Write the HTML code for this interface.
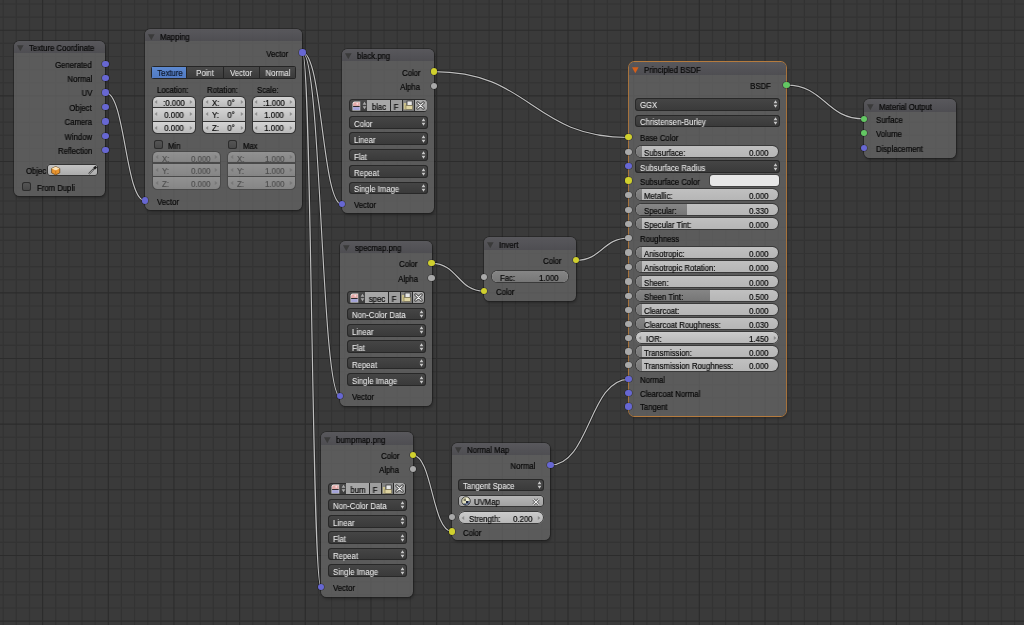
<!DOCTYPE html><html><head><meta charset="utf-8"><style>
html,body{margin:0;padding:0;width:1024px;height:625px;overflow:hidden;background:#3a3a3a}
.abs{position:absolute}
.t{position:absolute;font-family:"Liberation Sans",sans-serif;font-size:8.2px;line-height:10.66px;white-space:nowrap;will-change:transform;-webkit-text-stroke:0.2px currentColor;transform:scaleX(0.945);transform-origin:0 0}
.t.r{transform-origin:100% 0}
.t.c{transform:translateX(-50%) scaleX(0.945);transform-origin:50% 0}
.nd{position:absolute;border-radius:5.5px;background:rgba(104,104,104,0.72);box-shadow:0 0 0 0.8px rgba(25,25,25,0.6),1px 2px 3px rgba(0,0,0,0.3);overflow:hidden}
.nd.act{box-shadow:0 0 0 0.9px #b57b3e,1px 2px 3px rgba(0,0,0,0.3)}
.hd{position:absolute;left:0;top:0;right:0;background:linear-gradient(rgba(87,86,93,0.6),rgba(70,69,76,0.6))}
.sk{position:absolute;border-radius:50%;box-shadow:0 0 0 0.6px rgba(0,0,0,0.4)}
.dd{position:absolute;border-radius:3.5px;background:linear-gradient(#464646,#393939);box-shadow:inset 0 0 0 1px #282828}
.sl{position:absolute;border-radius:7px;background:#3a3a3a}
.sli{position:absolute;left:1px;top:1px;right:1px;bottom:1px;border-radius:6px;overflow:hidden;background:linear-gradient(#c0c0c0,#b6b6b6)}
.slf{position:absolute;left:0;top:0;bottom:0;background:linear-gradient(#868686,#767676)}
.nf{position:absolute;border-radius:7px;background:linear-gradient(#cdcdcd,#b6b6b6);box-shadow:inset 0 0 0 1px #3a3a3a}
.cb{position:absolute;border-radius:2.5px;background:linear-gradient(#565656,#464646);box-shadow:inset 0 0 0 1px #2c2c2c}

</style></head><body>
<svg class="abs" style="left:0;top:0" width="1024" height="625"><rect width="1024" height="625" fill="#3a3a3a"/><path d="M3.20 0V625M16.34 0V625M29.47 0V625M55.74 0V625M68.88 0V625M82.01 0V625M95.14 0V625M121.42 0V625M134.55 0V625M147.68 0V625M160.82 0V625M187.09 0V625M200.22 0V625M213.36 0V625M226.49 0V625M252.76 0V625M265.90 0V625M279.03 0V625M292.17 0V625M318.44 0V625M331.57 0V625M344.71 0V625M357.84 0V625M384.12 0V625M397.25 0V625M410.38 0V625M423.52 0V625M449.79 0V625M462.92 0V625M476.06 0V625M489.19 0V625M515.47 0V625M528.60 0V625M541.74 0V625M554.87 0V625M581.14 0V625M594.28 0V625M607.41 0V625M620.55 0V625M646.82 0V625M659.95 0V625M673.09 0V625M686.22 0V625M712.49 0V625M725.62 0V625M738.76 0V625M751.89 0V625M778.17 0V625M791.30 0V625M804.44 0V625M817.57 0V625M843.84 0V625M856.98 0V625M870.11 0V625M883.25 0V625M909.51 0V625M922.65 0V625M935.79 0V625M948.92 0V625M975.19 0V625M988.33 0V625M1001.46 0V625M1014.60 0V625M0 4.00H1024M0 17.13H1024M0 43.39H1024M0 56.52H1024M0 69.65H1024M0 82.78H1024M0 109.04H1024M0 122.17H1024M0 135.30H1024M0 148.43H1024M0 174.69H1024M0 187.82H1024M0 200.95H1024M0 214.08H1024M0 240.34H1024M0 253.47H1024M0 266.60H1024M0 279.73H1024M0 305.99H1024M0 319.12H1024M0 332.25H1024M0 345.38H1024M0 371.64H1024M0 384.77H1024M0 397.90H1024M0 411.03H1024M0 437.29H1024M0 450.42H1024M0 463.55H1024M0 476.68H1024M0 502.94H1024M0 516.07H1024M0 529.20H1024M0 542.33H1024M0 568.59H1024M0 581.72H1024M0 594.85H1024M0 607.98H1024" stroke="#333333" stroke-width="1.1" fill="none"/><path d="M42.61 0V625M108.28 0V625M173.95 0V625M239.63 0V625M305.31 0V625M370.98 0V625M436.65 0V625M502.33 0V625M568.00 0V625M633.68 0V625M699.36 0V625M765.03 0V625M830.71 0V625M896.38 0V625M962.06 0V625M0 30.26H1024M0 95.91H1024M0 161.56H1024M0 227.21H1024M0 292.86H1024M0 358.51H1024M0 424.16H1024M0 489.81H1024M0 555.46H1024M0 621.11H1024" stroke="#2c2c2c" stroke-width="1.1" fill="none"/><path d="M105.50 92.60 C125.25 92.60 125.25 200.60 145.00 200.60" fill="none" stroke="rgba(0,0,0,0.5)" stroke-width="2.5"/><path d="M105.50 92.60 C125.25 92.60 125.25 200.60 145.00 200.60" fill="none" stroke="#bebebe" stroke-width="1.2"/><path d="M302.50 52.60 C322.20 52.60 322.20 204.30 341.90 204.30" fill="none" stroke="rgba(0,0,0,0.5)" stroke-width="2.5"/><path d="M302.50 52.60 C322.20 52.60 322.20 204.30 341.90 204.30" fill="none" stroke="#bebebe" stroke-width="1.2"/><path d="M302.50 52.60 C321.20 52.60 321.20 396.30 339.90 396.30" fill="none" stroke="rgba(0,0,0,0.5)" stroke-width="2.5"/><path d="M302.50 52.60 C321.20 52.60 321.20 396.30 339.90 396.30" fill="none" stroke="#bebebe" stroke-width="1.2"/><path d="M302.50 52.60 C311.70 52.60 311.70 587.10 320.90 587.10" fill="none" stroke="rgba(0,0,0,0.5)" stroke-width="2.5"/><path d="M302.50 52.60 C311.70 52.60 311.70 587.10 320.90 587.10" fill="none" stroke="#bebebe" stroke-width="1.2"/><path d="M434.00 71.60 C531.30 71.60 531.30 137.50 628.60 137.50" fill="none" stroke="rgba(0,0,0,0.5)" stroke-width="2.5"/><path d="M434.00 71.60 C531.30 71.60 531.30 137.50 628.60 137.50" fill="none" stroke="#bebebe" stroke-width="1.2"/><path d="M431.70 263.30 C457.85 263.30 457.85 291.20 484.00 291.20" fill="none" stroke="rgba(0,0,0,0.5)" stroke-width="2.5"/><path d="M431.70 263.30 C457.85 263.30 457.85 291.20 484.00 291.20" fill="none" stroke="#bebebe" stroke-width="1.2"/><path d="M575.80 260.30 C602.20 260.30 602.20 238.20 628.60 238.20" fill="none" stroke="rgba(0,0,0,0.5)" stroke-width="2.5"/><path d="M575.80 260.30 C602.20 260.30 602.20 238.20 628.60 238.20" fill="none" stroke="#bebebe" stroke-width="1.2"/><path d="M412.70 455.10 C432.30 455.10 432.30 531.50 451.90 531.50" fill="none" stroke="rgba(0,0,0,0.5)" stroke-width="2.5"/><path d="M412.70 455.10 C432.30 455.10 432.30 531.50 451.90 531.50" fill="none" stroke="#bebebe" stroke-width="1.2"/><path d="M550.40 465.00 C589.50 465.00 589.50 379.30 628.60 379.30" fill="none" stroke="rgba(0,0,0,0.5)" stroke-width="2.5"/><path d="M550.40 465.00 C589.50 465.00 589.50 379.30 628.60 379.30" fill="none" stroke="#bebebe" stroke-width="1.2"/><path d="M786.40 85.20 C825.25 85.20 825.25 118.90 864.10 118.90" fill="none" stroke="rgba(0,0,0,0.5)" stroke-width="2.5"/><path d="M786.40 85.20 C825.25 85.20 825.25 118.90 864.10 118.90" fill="none" stroke="#bebebe" stroke-width="1.2"/></svg>
<div class="nd" style="left:13.90px;top:40.70px;width:91.40px;height:155.80px;"><div class="hd" style="height:12.50px"></div></div>
<svg class="abs" style="left:17.20px;top:44.80px" width="7" height="7"><path d="M0 0.2 L6.6 0.2 L3.3 6.2 Z" fill="#3a3a3a"/></svg>
<div class="t" style="left:28.90px;top:44px;color:#080808;">Texture Coordinate</div>
<div class="t r" style="right:932.00px;top:61px;color:#080808;">Generated</div>
<div class="sk" style="left:102.30px;top:60.50px;width:6.40px;height:6.40px;background:#6767d2"></div>
<div class="t r" style="right:932.00px;top:75px;color:#080808;">Normal</div>
<div class="sk" style="left:102.30px;top:74.93px;width:6.40px;height:6.40px;background:#6767d2"></div>
<div class="t r" style="right:932.00px;top:89px;color:#080808;">UV</div>
<div class="sk" style="left:102.30px;top:89.36px;width:6.40px;height:6.40px;background:#6767d2"></div>
<div class="t r" style="right:932.00px;top:104px;color:#080808;">Object</div>
<div class="sk" style="left:102.30px;top:103.79px;width:6.40px;height:6.40px;background:#6767d2"></div>
<div class="t r" style="right:932.00px;top:118px;color:#080808;">Camera</div>
<div class="sk" style="left:102.30px;top:118.22px;width:6.40px;height:6.40px;background:#6767d2"></div>
<div class="t r" style="right:932.00px;top:133px;color:#080808;">Window</div>
<div class="sk" style="left:102.30px;top:132.65px;width:6.40px;height:6.40px;background:#6767d2"></div>
<div class="t r" style="right:932.00px;top:147px;color:#080808;">Reflection</div>
<div class="sk" style="left:102.30px;top:147.08px;width:6.40px;height:6.40px;background:#6767d2"></div>
<div class="t" style="left:25.50px;top:167px;color:#080808;">Objec</div>
<div class="abs" style="left:47.20px;top:163.50px;width:51.00px;height:12.90px;border-radius:3px;background:linear-gradient(#c6c6c6,#a9a9a9);box-shadow:inset 0 0 0 1px #353535"></div>
<svg class="abs" style="left:50.6px;top:165.6px" width="10" height="10"><path d="M4.7 0.5 L8.8 2.5 L8.8 6.9 L4.7 8.9 L0.6 6.9 L0.6 2.5 Z" fill="#e9952f" stroke="#4a3010" stroke-width="0.6"/><path d="M0.8 2.6 L4.7 4.5 L8.6 2.6 L4.7 0.7 Z" fill="#fbe2b8"/><path d="M4.7 4.5 L4.7 8.7" stroke="#b86a1c" stroke-width="0.7"/></svg>
<svg class="abs" style="left:88.2px;top:165.4px" width="10" height="10"><path d="M0.9 8.9 L5.6 4.2" stroke="#2a2a2a" stroke-width="1.7"/><path d="M1.1 8.7 L5.3 4.5" stroke="#e8e8e8" stroke-width="0.7"/><path d="M5 2.9 L7.3 0.7 L9.1 2.5 L6.9 4.8 Z" fill="#1e1e1e"/></svg>
<div class="cb" style="left:22.30px;top:182.30px;width:9.10px;height:8.70px;"></div>
<div class="t" style="left:36.70px;top:184px;color:#080808;">From Dupli</div>
<div class="nd" style="left:145.00px;top:28.90px;width:157.40px;height:180.80px;"><div class="hd" style="height:12.40px"></div></div>
<svg class="abs" style="left:148.30px;top:33.80px" width="7" height="7"><path d="M0 0.2 L6.6 0.2 L3.3 6.2 Z" fill="#3a3a3a"/></svg>
<div class="t" style="left:160.00px;top:33px;color:#080808;">Mapping</div>
<div class="t r" style="right:735.40px;top:50px;color:#080808;">Vector</div>
<div class="sk" style="left:299.30px;top:49.40px;width:6.40px;height:6.40px;background:#6767d2"></div>
<div class="abs" style="left:151.30px;top:65.60px;width:144.50px;height:13.20px;border-radius:3px;overflow:hidden;box-shadow:inset 0 0 0 1px #252525"><div class="abs" style="left:0;top:0;width:35.6px;bottom:0;background:linear-gradient(#5e8bd2,#5079c2);box-shadow:inset 0 0 0 1px #252525"></div><div class="abs" style="left:35.6px;top:0;right:0;bottom:0;background:linear-gradient(#4a4a4a,#393939);box-shadow:inset 0 1px 0 #252525,inset 0 -1px 0 #252525,inset -1px 0 0 #252525"></div><div class="abs" style="left:71.5px;top:0;width:1px;bottom:0;background:#252525"></div><div class="abs" style="left:107.3px;top:0;width:1px;bottom:0;background:#252525"></div></div>
<div class="t c" style="left:169.50px;top:69px;color:#0c1424;">Texture</div>
<div class="t c" style="left:205.40px;top:69px;color:#ececec;-webkit-text-stroke:0.05px currentColor;">Point</div>
<div class="t c" style="left:241.40px;top:69px;color:#ececec;-webkit-text-stroke:0.05px currentColor;">Vector</div>
<div class="t c" style="left:277.50px;top:69px;color:#ececec;-webkit-text-stroke:0.05px currentColor;">Normal</div>
<div class="t" style="left:156.80px;top:86px;color:#080808;">Location:</div>
<div class="t" style="left:206.80px;top:86px;color:#080808;">Rotation:</div>
<div class="t" style="left:256.80px;top:86px;color:#080808;">Scale:</div>
<div class="abs" style="left:151.80px;top:95.50px;width:44.00px;height:38.90px;border-radius:5.5px;background:#353535"><div class="abs" style="left:1px;top:1px;right:1px;bottom:1px;border-radius:4.5px;overflow:hidden;background:#353535"><div class="abs" style="left:0;right:0;top:0.00px;height:10.35px;background:linear-gradient(#d4d4d4,#bababa)"></div><div class="abs" style="left:0;right:0;top:11.55px;height:12.60px;background:linear-gradient(#d4d4d4,#bababa)"></div><div class="abs" style="left:0;right:0;top:25.35px;height:11.55px;background:linear-gradient(#d4d4d4,#bababa)"></div></div></div>
<div class="t c" style="left:174.00px;top:99px;color:#080808;">:0.000</div>
<svg class="abs" style="left:154.40px;top:98.68px" width="4" height="6"><path d="M0.6 3 L3.2 0.9 L3.2 5.1 Z" fill="#8e8e8e"/></svg>
<svg class="abs" style="left:189.20px;top:98.68px" width="4" height="6"><path d="M3.4 3 L0.8 0.9 L0.8 5.1 Z" fill="#8e8e8e"/></svg>
<div class="t c" style="left:174.00px;top:111px;color:#080808;">0.000</div>
<svg class="abs" style="left:154.40px;top:111.35px" width="4" height="6"><path d="M0.6 3 L3.2 0.9 L3.2 5.1 Z" fill="#8e8e8e"/></svg>
<svg class="abs" style="left:189.20px;top:111.35px" width="4" height="6"><path d="M3.4 3 L0.8 0.9 L0.8 5.1 Z" fill="#8e8e8e"/></svg>
<div class="t c" style="left:174.00px;top:124px;color:#080808;">0.000</div>
<svg class="abs" style="left:154.40px;top:124.62px" width="4" height="6"><path d="M0.6 3 L3.2 0.9 L3.2 5.1 Z" fill="#8e8e8e"/></svg>
<svg class="abs" style="left:189.20px;top:124.62px" width="4" height="6"><path d="M3.4 3 L0.8 0.9 L0.8 5.1 Z" fill="#8e8e8e"/></svg>
<div class="abs" style="left:202.40px;top:95.50px;width:43.70px;height:38.90px;border-radius:5.5px;background:#353535"><div class="abs" style="left:1px;top:1px;right:1px;bottom:1px;border-radius:4.5px;overflow:hidden;background:#353535"><div class="abs" style="left:0;right:0;top:0.00px;height:10.35px;background:linear-gradient(#d4d4d4,#bababa)"></div><div class="abs" style="left:0;right:0;top:11.55px;height:12.60px;background:linear-gradient(#d4d4d4,#bababa)"></div><div class="abs" style="left:0;right:0;top:25.35px;height:11.55px;background:linear-gradient(#d4d4d4,#bababa)"></div></div></div>
<div class="t" style="left:212.00px;top:99px;color:#080808;">X:</div>
<div class="t r" style="right:788.90px;top:99px;color:#080808;">0°</div>
<svg class="abs" style="left:205.00px;top:98.68px" width="4" height="6"><path d="M0.6 3 L3.2 0.9 L3.2 5.1 Z" fill="#8e8e8e"/></svg>
<svg class="abs" style="left:239.50px;top:98.68px" width="4" height="6"><path d="M3.4 3 L0.8 0.9 L0.8 5.1 Z" fill="#8e8e8e"/></svg>
<div class="t" style="left:212.00px;top:111px;color:#080808;">Y:</div>
<div class="t r" style="right:788.90px;top:111px;color:#080808;">0°</div>
<svg class="abs" style="left:205.00px;top:111.35px" width="4" height="6"><path d="M0.6 3 L3.2 0.9 L3.2 5.1 Z" fill="#8e8e8e"/></svg>
<svg class="abs" style="left:239.50px;top:111.35px" width="4" height="6"><path d="M3.4 3 L0.8 0.9 L0.8 5.1 Z" fill="#8e8e8e"/></svg>
<div class="t" style="left:212.00px;top:124px;color:#080808;">Z:</div>
<div class="t r" style="right:788.90px;top:124px;color:#080808;">0°</div>
<svg class="abs" style="left:205.00px;top:124.62px" width="4" height="6"><path d="M0.6 3 L3.2 0.9 L3.2 5.1 Z" fill="#8e8e8e"/></svg>
<svg class="abs" style="left:239.50px;top:124.62px" width="4" height="6"><path d="M3.4 3 L0.8 0.9 L0.8 5.1 Z" fill="#8e8e8e"/></svg>
<div class="abs" style="left:251.80px;top:95.50px;width:43.80px;height:38.90px;border-radius:5.5px;background:#353535"><div class="abs" style="left:1px;top:1px;right:1px;bottom:1px;border-radius:4.5px;overflow:hidden;background:#353535"><div class="abs" style="left:0;right:0;top:0.00px;height:10.35px;background:linear-gradient(#d4d4d4,#bababa)"></div><div class="abs" style="left:0;right:0;top:11.55px;height:12.60px;background:linear-gradient(#d4d4d4,#bababa)"></div><div class="abs" style="left:0;right:0;top:25.35px;height:11.55px;background:linear-gradient(#d4d4d4,#bababa)"></div></div></div>
<div class="t c" style="left:273.90px;top:99px;color:#080808;">:1.000</div>
<svg class="abs" style="left:254.40px;top:98.68px" width="4" height="6"><path d="M0.6 3 L3.2 0.9 L3.2 5.1 Z" fill="#8e8e8e"/></svg>
<svg class="abs" style="left:289.00px;top:98.68px" width="4" height="6"><path d="M3.4 3 L0.8 0.9 L0.8 5.1 Z" fill="#8e8e8e"/></svg>
<div class="t c" style="left:273.90px;top:111px;color:#080808;">1.000</div>
<svg class="abs" style="left:254.40px;top:111.35px" width="4" height="6"><path d="M0.6 3 L3.2 0.9 L3.2 5.1 Z" fill="#8e8e8e"/></svg>
<svg class="abs" style="left:289.00px;top:111.35px" width="4" height="6"><path d="M3.4 3 L0.8 0.9 L0.8 5.1 Z" fill="#8e8e8e"/></svg>
<div class="t c" style="left:273.90px;top:124px;color:#080808;">1.000</div>
<svg class="abs" style="left:254.40px;top:124.62px" width="4" height="6"><path d="M0.6 3 L3.2 0.9 L3.2 5.1 Z" fill="#8e8e8e"/></svg>
<svg class="abs" style="left:289.00px;top:124.62px" width="4" height="6"><path d="M3.4 3 L0.8 0.9 L0.8 5.1 Z" fill="#8e8e8e"/></svg>
<div class="cb" style="left:153.80px;top:140.30px;width:9.00px;height:8.70px;"></div>
<div class="t" style="left:167.90px;top:142px;color:#080808;">Min</div>
<div class="cb" style="left:228.40px;top:140.30px;width:9.10px;height:8.70px;"></div>
<div class="t" style="left:242.90px;top:142px;color:#080808;">Max</div>
<div class="abs" style="opacity:0.45;left:152.00px;top:150.90px;width:69.00px;height:39.30px;border-radius:5.5px;background:#353535"><div class="abs" style="left:1px;top:1px;right:1px;bottom:1px;border-radius:4.5px;overflow:hidden;background:#353535"><div class="abs" style="left:0;right:0;top:0.00px;height:10.60px;background:linear-gradient(#d4d4d4,#bababa)"></div><div class="abs" style="left:0;right:0;top:11.80px;height:12.40px;background:linear-gradient(#d4d4d4,#bababa)"></div><div class="abs" style="left:0;right:0;top:25.40px;height:11.90px;background:linear-gradient(#d4d4d4,#bababa)"></div></div></div>
<div class="t" style="left:161.60px;top:155px;color:rgba(40,40,40,0.55);">X:</div>
<div class="t r" style="right:814.00px;top:155px;color:rgba(40,40,40,0.55);">0.000</div>
<svg class="abs" style="left:154.60px;top:154.20px" width="4" height="6"><path d="M0.6 3 L3.2 0.9 L3.2 5.1 Z" fill="rgba(100,100,100,0.5)"/></svg>
<svg class="abs" style="left:214.40px;top:154.20px" width="4" height="6"><path d="M3.4 3 L0.8 0.9 L0.8 5.1 Z" fill="rgba(100,100,100,0.5)"/></svg>
<div class="t" style="left:161.60px;top:167px;color:rgba(40,40,40,0.55);">Y:</div>
<div class="t r" style="right:814.00px;top:167px;color:rgba(40,40,40,0.55);">0.000</div>
<svg class="abs" style="left:154.60px;top:166.90px" width="4" height="6"><path d="M0.6 3 L3.2 0.9 L3.2 5.1 Z" fill="rgba(100,100,100,0.5)"/></svg>
<svg class="abs" style="left:214.40px;top:166.90px" width="4" height="6"><path d="M3.4 3 L0.8 0.9 L0.8 5.1 Z" fill="rgba(100,100,100,0.5)"/></svg>
<div class="t" style="left:161.60px;top:180px;color:rgba(40,40,40,0.55);">Z:</div>
<div class="t r" style="right:814.00px;top:180px;color:rgba(40,40,40,0.55);">0.000</div>
<svg class="abs" style="left:154.60px;top:180.25px" width="4" height="6"><path d="M0.6 3 L3.2 0.9 L3.2 5.1 Z" fill="rgba(100,100,100,0.5)"/></svg>
<svg class="abs" style="left:214.40px;top:180.25px" width="4" height="6"><path d="M3.4 3 L0.8 0.9 L0.8 5.1 Z" fill="rgba(100,100,100,0.5)"/></svg>
<div class="abs" style="opacity:0.45;left:227.00px;top:150.90px;width:68.50px;height:39.30px;border-radius:5.5px;background:#353535"><div class="abs" style="left:1px;top:1px;right:1px;bottom:1px;border-radius:4.5px;overflow:hidden;background:#353535"><div class="abs" style="left:0;right:0;top:0.00px;height:10.60px;background:linear-gradient(#d4d4d4,#bababa)"></div><div class="abs" style="left:0;right:0;top:11.80px;height:12.40px;background:linear-gradient(#d4d4d4,#bababa)"></div><div class="abs" style="left:0;right:0;top:25.40px;height:11.90px;background:linear-gradient(#d4d4d4,#bababa)"></div></div></div>
<div class="t" style="left:236.60px;top:155px;color:rgba(40,40,40,0.55);">X:</div>
<div class="t r" style="right:739.50px;top:155px;color:rgba(40,40,40,0.55);">1.000</div>
<svg class="abs" style="left:229.60px;top:154.20px" width="4" height="6"><path d="M0.6 3 L3.2 0.9 L3.2 5.1 Z" fill="rgba(100,100,100,0.5)"/></svg>
<svg class="abs" style="left:288.90px;top:154.20px" width="4" height="6"><path d="M3.4 3 L0.8 0.9 L0.8 5.1 Z" fill="rgba(100,100,100,0.5)"/></svg>
<div class="t" style="left:236.60px;top:167px;color:rgba(40,40,40,0.55);">Y:</div>
<div class="t r" style="right:739.50px;top:167px;color:rgba(40,40,40,0.55);">1.000</div>
<svg class="abs" style="left:229.60px;top:166.90px" width="4" height="6"><path d="M0.6 3 L3.2 0.9 L3.2 5.1 Z" fill="rgba(100,100,100,0.5)"/></svg>
<svg class="abs" style="left:288.90px;top:166.90px" width="4" height="6"><path d="M3.4 3 L0.8 0.9 L0.8 5.1 Z" fill="rgba(100,100,100,0.5)"/></svg>
<div class="t" style="left:236.60px;top:180px;color:rgba(40,40,40,0.55);">Z:</div>
<div class="t r" style="right:739.50px;top:180px;color:rgba(40,40,40,0.55);">1.000</div>
<svg class="abs" style="left:229.60px;top:180.25px" width="4" height="6"><path d="M0.6 3 L3.2 0.9 L3.2 5.1 Z" fill="rgba(100,100,100,0.5)"/></svg>
<svg class="abs" style="left:288.90px;top:180.25px" width="4" height="6"><path d="M3.4 3 L0.8 0.9 L0.8 5.1 Z" fill="rgba(100,100,100,0.5)"/></svg>
<div class="sk" style="left:141.80px;top:197.40px;width:6.40px;height:6.40px;background:#6767d2"></div>
<div class="t" style="left:156.60px;top:198px;color:#080808;">Vector</div>
<div class="nd" style="left:342.00px;top:48.50px;width:91.80px;height:164.90px;"><div class="hd" style="height:12.30px"></div></div>
<svg class="abs" style="left:345.30px;top:52.80px" width="7" height="7"><path d="M0 0.2 L6.6 0.2 L3.3 6.2 Z" fill="#3a3a3a"/></svg>
<div class="t" style="left:357.00px;top:52px;color:#080808;">black.png</div>
<div class="t r" style="right:603.80px;top:69px;color:#080808;">Color</div>
<div class="sk" style="left:430.60px;top:68.40px;width:6.40px;height:6.40px;background:#d0d02e"></div>
<div class="t r" style="right:603.80px;top:83px;color:#080808;">Alpha</div>
<div class="sk" style="left:430.60px;top:83.10px;width:6.40px;height:6.40px;background:#a9a9a9"></div>
<div class="abs" style="left:348.60px;top:99.20px;width:78.80px;height:12.60px;border-radius:3.5px;overflow:hidden;background:#2a2a2a"><div class="abs" style="left:1px;top:1px;width:17.6px;bottom:1px;border-radius:2.5px 0 0 2.5px;background:linear-gradient(#4a4a4a,#3c3c3c)"></div><div class="abs" style="left:18.8px;top:0.8px;width:22.5px;bottom:0.8px;background:#a7a7a7"></div><div class="abs" style="left:42.0px;top:0.8px;width:11.2px;bottom:0.8px;background:#9e9e9e"></div><div class="abs" style="left:54.0px;top:0.8px;width:11.5px;bottom:0.8px;background:linear-gradient(#858585,#727272)"></div><div class="abs" style="left:66.3px;top:0.8px;right:0.8px;bottom:0.8px;border-radius:0 2.5px 2.5px 0;background:linear-gradient(#aeaeae,#9c9c9c)"></div></div>
<svg class="abs" style="left:352.20px;top:100.60px" width="9" height="10"><path d="M2.2 0.3 H8.4 V9.7 H0.3 V2.2 Z" fill="#ececec" stroke="#3a3a3a" stroke-width="0.4"/><rect x="1.1" y="1.3" width="6.6" height="3.9" fill="#e2a8a6"/><path d="M1.1 1.3 H2.6 L1.1 2.8 Z" fill="#f4f4f4"/><circle cx="5.3" cy="2.7" r="1.0" fill="#f4dcdc"/><rect x="1.1" y="5.0" width="6.6" height="1.1" fill="#2e2a2e"/><rect x="1.1" y="6.1" width="6.6" height="2.9" fill="#a2a2d6"/></svg>
<svg class="abs" style="left:361.50px;top:101.00px" width="5" height="9"><path d="M2.5 0.8 L4.4 3.8 L0.6 3.8 Z M2.5 8.2 L4.4 5.2 L0.6 5.2 Z" fill="#aaaaaa"/></svg>
<div class="t c" style="left:378.60px;top:103px;color:#080808;">blac</div>
<div class="t c" style="left:396.20px;top:103px;color:#080808;">F</div>
<svg class="abs" style="left:403.20px;top:100.30px" width="11" height="10"><rect x="4.0" y="1.0" width="5.2" height="4.6" fill="#e6e6e6" stroke="#262626" stroke-width="0.7"/><path d="M0.8 2.9 H3.2 V9.4 H0.8 Z" fill="#c9bf8a"/><rect x="3.0" y="5.4" width="6.6" height="4.0" fill="#ddd3a0" stroke="#5a5230" stroke-width="0.4"/></svg>
<svg class="abs" style="left:416.40px;top:100.90px" width="9" height="9"><path d="M1.7 1.7 L7.3 7.3 M7.3 1.7 L1.7 7.3" stroke="#3c3c3c" stroke-width="2.7" stroke-linecap="round"/><path d="M1.8 1.8 L7.2 7.2 M7.2 1.8 L1.8 7.2" stroke="#f0f0f0" stroke-width="1.2" stroke-linecap="round"/></svg>
<div class="dd" style="left:348.60px;top:116.00px;width:79.20px;height:12.60px;"></div>
<div class="t" style="left:353.60px;top:120px;color:#ececec;-webkit-text-stroke:0.05px currentColor;">Color</div>
<svg class="abs" style="left:421.10px;top:117.30px" width="5" height="10"><path d="M2.5 1.2 L4.4 4.3 L0.6 4.3 Z M2.5 8.8 L4.4 5.7 L0.6 5.7 Z" fill="#c8c8c8"/></svg>
<div class="dd" style="left:348.60px;top:132.40px;width:79.20px;height:12.60px;"></div>
<div class="t" style="left:353.60px;top:136px;color:#ececec;-webkit-text-stroke:0.05px currentColor;">Linear</div>
<svg class="abs" style="left:421.10px;top:133.70px" width="5" height="10"><path d="M2.5 1.2 L4.4 4.3 L0.6 4.3 Z M2.5 8.8 L4.4 5.7 L0.6 5.7 Z" fill="#c8c8c8"/></svg>
<div class="dd" style="left:348.60px;top:148.80px;width:79.20px;height:12.60px;"></div>
<div class="t" style="left:353.60px;top:153px;color:#ececec;-webkit-text-stroke:0.05px currentColor;">Flat</div>
<svg class="abs" style="left:421.10px;top:150.10px" width="5" height="10"><path d="M2.5 1.2 L4.4 4.3 L0.6 4.3 Z M2.5 8.8 L4.4 5.7 L0.6 5.7 Z" fill="#c8c8c8"/></svg>
<div class="dd" style="left:348.60px;top:165.20px;width:79.20px;height:12.60px;"></div>
<div class="t" style="left:353.60px;top:169px;color:#ececec;-webkit-text-stroke:0.05px currentColor;">Repeat</div>
<svg class="abs" style="left:421.10px;top:166.50px" width="5" height="10"><path d="M2.5 1.2 L4.4 4.3 L0.6 4.3 Z M2.5 8.8 L4.4 5.7 L0.6 5.7 Z" fill="#c8c8c8"/></svg>
<div class="dd" style="left:348.60px;top:181.60px;width:79.20px;height:12.60px;"></div>
<div class="t" style="left:353.60px;top:185px;color:#ececec;-webkit-text-stroke:0.05px currentColor;">Single Image</div>
<svg class="abs" style="left:421.10px;top:182.90px" width="5" height="10"><path d="M2.5 1.2 L4.4 4.3 L0.6 4.3 Z M2.5 8.8 L4.4 5.7 L0.6 5.7 Z" fill="#c8c8c8"/></svg>
<div class="sk" style="left:338.80px;top:201.10px;width:6.40px;height:6.40px;background:#6767d2"></div>
<div class="t" style="left:353.60px;top:201px;color:#080808;">Vector</div>
<div class="nd" style="left:340.00px;top:240.50px;width:91.60px;height:165.30px;"><div class="hd" style="height:12.50px"></div></div>
<svg class="abs" style="left:343.30px;top:244.80px" width="7" height="7"><path d="M0 0.2 L6.6 0.2 L3.3 6.2 Z" fill="#3a3a3a"/></svg>
<div class="t" style="left:355.00px;top:244px;color:#080808;">specmap.png</div>
<div class="t r" style="right:606.00px;top:260px;color:#080808;">Color</div>
<div class="sk" style="left:428.40px;top:260.10px;width:6.40px;height:6.40px;background:#d0d02e"></div>
<div class="t r" style="right:606.00px;top:275px;color:#080808;">Alpha</div>
<div class="sk" style="left:428.40px;top:274.70px;width:6.40px;height:6.40px;background:#a9a9a9"></div>
<div class="abs" style="left:346.60px;top:291.20px;width:78.60px;height:12.50px;border-radius:3.5px;overflow:hidden;background:#2a2a2a"><div class="abs" style="left:1px;top:1px;width:17.6px;bottom:1px;border-radius:2.5px 0 0 2.5px;background:linear-gradient(#4a4a4a,#3c3c3c)"></div><div class="abs" style="left:18.8px;top:0.8px;width:22.5px;bottom:0.8px;background:#a7a7a7"></div><div class="abs" style="left:42.0px;top:0.8px;width:11.2px;bottom:0.8px;background:#9e9e9e"></div><div class="abs" style="left:54.0px;top:0.8px;width:11.5px;bottom:0.8px;background:linear-gradient(#858585,#727272)"></div><div class="abs" style="left:66.3px;top:0.8px;right:0.8px;bottom:0.8px;border-radius:0 2.5px 2.5px 0;background:linear-gradient(#aeaeae,#9c9c9c)"></div></div>
<svg class="abs" style="left:350.20px;top:292.55px" width="9" height="10"><path d="M2.2 0.3 H8.4 V9.7 H0.3 V2.2 Z" fill="#ececec" stroke="#3a3a3a" stroke-width="0.4"/><rect x="1.1" y="1.3" width="6.6" height="3.9" fill="#e2a8a6"/><path d="M1.1 1.3 H2.6 L1.1 2.8 Z" fill="#f4f4f4"/><circle cx="5.3" cy="2.7" r="1.0" fill="#f4dcdc"/><rect x="1.1" y="5.0" width="6.6" height="1.1" fill="#2e2a2e"/><rect x="1.1" y="6.1" width="6.6" height="2.9" fill="#a2a2d6"/></svg>
<svg class="abs" style="left:359.50px;top:292.95px" width="5" height="9"><path d="M2.5 0.8 L4.4 3.8 L0.6 3.8 Z M2.5 8.2 L4.4 5.2 L0.6 5.2 Z" fill="#aaaaaa"/></svg>
<div class="t c" style="left:376.60px;top:295px;color:#080808;">spec</div>
<div class="t c" style="left:394.20px;top:295px;color:#080808;">F</div>
<svg class="abs" style="left:401.20px;top:292.25px" width="11" height="10"><rect x="4.0" y="1.0" width="5.2" height="4.6" fill="#e6e6e6" stroke="#262626" stroke-width="0.7"/><path d="M0.8 2.9 H3.2 V9.4 H0.8 Z" fill="#c9bf8a"/><rect x="3.0" y="5.4" width="6.6" height="4.0" fill="#ddd3a0" stroke="#5a5230" stroke-width="0.4"/></svg>
<svg class="abs" style="left:414.40px;top:292.85px" width="9" height="9"><path d="M1.7 1.7 L7.3 7.3 M7.3 1.7 L1.7 7.3" stroke="#3c3c3c" stroke-width="2.7" stroke-linecap="round"/><path d="M1.8 1.8 L7.2 7.2 M7.2 1.8 L1.8 7.2" stroke="#f0f0f0" stroke-width="1.2" stroke-linecap="round"/></svg>
<div class="dd" style="left:346.60px;top:307.60px;width:79.00px;height:12.60px;"></div>
<div class="t" style="left:351.60px;top:311px;color:#ececec;-webkit-text-stroke:0.05px currentColor;">Non-Color Data</div>
<svg class="abs" style="left:418.90px;top:308.90px" width="5" height="10"><path d="M2.5 1.2 L4.4 4.3 L0.6 4.3 Z M2.5 8.8 L4.4 5.7 L0.6 5.7 Z" fill="#c8c8c8"/></svg>
<div class="dd" style="left:346.60px;top:324.00px;width:79.00px;height:12.60px;"></div>
<div class="t" style="left:351.60px;top:328px;color:#ececec;-webkit-text-stroke:0.05px currentColor;">Linear</div>
<svg class="abs" style="left:418.90px;top:325.30px" width="5" height="10"><path d="M2.5 1.2 L4.4 4.3 L0.6 4.3 Z M2.5 8.8 L4.4 5.7 L0.6 5.7 Z" fill="#c8c8c8"/></svg>
<div class="dd" style="left:346.60px;top:340.40px;width:79.00px;height:12.60px;"></div>
<div class="t" style="left:351.60px;top:344px;color:#ececec;-webkit-text-stroke:0.05px currentColor;">Flat</div>
<svg class="abs" style="left:418.90px;top:341.70px" width="5" height="10"><path d="M2.5 1.2 L4.4 4.3 L0.6 4.3 Z M2.5 8.8 L4.4 5.7 L0.6 5.7 Z" fill="#c8c8c8"/></svg>
<div class="dd" style="left:346.60px;top:356.80px;width:79.00px;height:12.60px;"></div>
<div class="t" style="left:351.60px;top:361px;color:#ececec;-webkit-text-stroke:0.05px currentColor;">Repeat</div>
<svg class="abs" style="left:418.90px;top:358.10px" width="5" height="10"><path d="M2.5 1.2 L4.4 4.3 L0.6 4.3 Z M2.5 8.8 L4.4 5.7 L0.6 5.7 Z" fill="#c8c8c8"/></svg>
<div class="dd" style="left:346.60px;top:373.20px;width:79.00px;height:12.60px;"></div>
<div class="t" style="left:351.60px;top:377px;color:#ececec;-webkit-text-stroke:0.05px currentColor;">Single Image</div>
<svg class="abs" style="left:418.90px;top:374.50px" width="5" height="10"><path d="M2.5 1.2 L4.4 4.3 L0.6 4.3 Z M2.5 8.8 L4.4 5.7 L0.6 5.7 Z" fill="#c8c8c8"/></svg>
<div class="sk" style="left:336.80px;top:393.10px;width:6.40px;height:6.40px;background:#6767d2"></div>
<div class="t" style="left:351.60px;top:393px;color:#080808;">Vector</div>
<div class="nd" style="left:321.00px;top:432.40px;width:91.70px;height:164.30px;"><div class="hd" style="height:12.60px"></div></div>
<svg class="abs" style="left:324.30px;top:436.80px" width="7" height="7"><path d="M0 0.2 L6.6 0.2 L3.3 6.2 Z" fill="#3a3a3a"/></svg>
<div class="t" style="left:336.00px;top:436px;color:#080808;">bumpmap.png</div>
<div class="t r" style="right:624.90px;top:452px;color:#080808;">Color</div>
<div class="sk" style="left:409.50px;top:451.90px;width:6.40px;height:6.40px;background:#d0d02e"></div>
<div class="t r" style="right:624.90px;top:466px;color:#080808;">Alpha</div>
<div class="sk" style="left:409.50px;top:466.00px;width:6.40px;height:6.40px;background:#a9a9a9"></div>
<div class="abs" style="left:327.60px;top:482.50px;width:78.70px;height:12.50px;border-radius:3.5px;overflow:hidden;background:#2a2a2a"><div class="abs" style="left:1px;top:1px;width:17.6px;bottom:1px;border-radius:2.5px 0 0 2.5px;background:linear-gradient(#4a4a4a,#3c3c3c)"></div><div class="abs" style="left:18.8px;top:0.8px;width:22.5px;bottom:0.8px;background:#a7a7a7"></div><div class="abs" style="left:42.0px;top:0.8px;width:11.2px;bottom:0.8px;background:#9e9e9e"></div><div class="abs" style="left:54.0px;top:0.8px;width:11.5px;bottom:0.8px;background:linear-gradient(#858585,#727272)"></div><div class="abs" style="left:66.3px;top:0.8px;right:0.8px;bottom:0.8px;border-radius:0 2.5px 2.5px 0;background:linear-gradient(#aeaeae,#9c9c9c)"></div></div>
<svg class="abs" style="left:331.20px;top:483.85px" width="9" height="10"><path d="M2.2 0.3 H8.4 V9.7 H0.3 V2.2 Z" fill="#ececec" stroke="#3a3a3a" stroke-width="0.4"/><rect x="1.1" y="1.3" width="6.6" height="3.9" fill="#e2a8a6"/><path d="M1.1 1.3 H2.6 L1.1 2.8 Z" fill="#f4f4f4"/><circle cx="5.3" cy="2.7" r="1.0" fill="#f4dcdc"/><rect x="1.1" y="5.0" width="6.6" height="1.1" fill="#2e2a2e"/><rect x="1.1" y="6.1" width="6.6" height="2.9" fill="#a2a2d6"/></svg>
<svg class="abs" style="left:340.50px;top:484.25px" width="5" height="9"><path d="M2.5 0.8 L4.4 3.8 L0.6 3.8 Z M2.5 8.2 L4.4 5.2 L0.6 5.2 Z" fill="#aaaaaa"/></svg>
<div class="t c" style="left:357.60px;top:486px;color:#080808;">bum</div>
<div class="t c" style="left:375.20px;top:486px;color:#080808;">F</div>
<svg class="abs" style="left:382.20px;top:483.55px" width="11" height="10"><rect x="4.0" y="1.0" width="5.2" height="4.6" fill="#e6e6e6" stroke="#262626" stroke-width="0.7"/><path d="M0.8 2.9 H3.2 V9.4 H0.8 Z" fill="#c9bf8a"/><rect x="3.0" y="5.4" width="6.6" height="4.0" fill="#ddd3a0" stroke="#5a5230" stroke-width="0.4"/></svg>
<svg class="abs" style="left:395.40px;top:484.15px" width="9" height="9"><path d="M1.7 1.7 L7.3 7.3 M7.3 1.7 L1.7 7.3" stroke="#3c3c3c" stroke-width="2.7" stroke-linecap="round"/><path d="M1.8 1.8 L7.2 7.2 M7.2 1.8 L1.8 7.2" stroke="#f0f0f0" stroke-width="1.2" stroke-linecap="round"/></svg>
<div class="dd" style="left:327.60px;top:498.60px;width:79.10px;height:12.60px;"></div>
<div class="t" style="left:332.60px;top:502px;color:#ececec;-webkit-text-stroke:0.05px currentColor;">Non-Color Data</div>
<svg class="abs" style="left:400.00px;top:499.90px" width="5" height="10"><path d="M2.5 1.2 L4.4 4.3 L0.6 4.3 Z M2.5 8.8 L4.4 5.7 L0.6 5.7 Z" fill="#c8c8c8"/></svg>
<div class="dd" style="left:327.60px;top:515.00px;width:79.10px;height:12.60px;"></div>
<div class="t" style="left:332.60px;top:519px;color:#ececec;-webkit-text-stroke:0.05px currentColor;">Linear</div>
<svg class="abs" style="left:400.00px;top:516.30px" width="5" height="10"><path d="M2.5 1.2 L4.4 4.3 L0.6 4.3 Z M2.5 8.8 L4.4 5.7 L0.6 5.7 Z" fill="#c8c8c8"/></svg>
<div class="dd" style="left:327.60px;top:531.40px;width:79.10px;height:12.60px;"></div>
<div class="t" style="left:332.60px;top:535px;color:#ececec;-webkit-text-stroke:0.05px currentColor;">Flat</div>
<svg class="abs" style="left:400.00px;top:532.70px" width="5" height="10"><path d="M2.5 1.2 L4.4 4.3 L0.6 4.3 Z M2.5 8.8 L4.4 5.7 L0.6 5.7 Z" fill="#c8c8c8"/></svg>
<div class="dd" style="left:327.60px;top:547.80px;width:79.10px;height:12.60px;"></div>
<div class="t" style="left:332.60px;top:552px;color:#ececec;-webkit-text-stroke:0.05px currentColor;">Repeat</div>
<svg class="abs" style="left:400.00px;top:549.10px" width="5" height="10"><path d="M2.5 1.2 L4.4 4.3 L0.6 4.3 Z M2.5 8.8 L4.4 5.7 L0.6 5.7 Z" fill="#c8c8c8"/></svg>
<div class="dd" style="left:327.60px;top:564.20px;width:79.10px;height:12.60px;"></div>
<div class="t" style="left:332.60px;top:568px;color:#ececec;-webkit-text-stroke:0.05px currentColor;">Single Image</div>
<svg class="abs" style="left:400.00px;top:565.50px" width="5" height="10"><path d="M2.5 1.2 L4.4 4.3 L0.6 4.3 Z M2.5 8.8 L4.4 5.7 L0.6 5.7 Z" fill="#c8c8c8"/></svg>
<div class="sk" style="left:317.80px;top:583.90px;width:6.40px;height:6.40px;background:#6767d2"></div>
<div class="t" style="left:332.60px;top:584px;color:#080808;">Vector</div>
<div class="nd" style="left:484.00px;top:237.10px;width:91.80px;height:63.70px;"><div class="hd" style="height:12.90px"></div></div>
<svg class="abs" style="left:487.30px;top:241.80px" width="7" height="7"><path d="M0 0.2 L6.6 0.2 L3.3 6.2 Z" fill="#3a3a3a"/></svg>
<div class="t" style="left:499.00px;top:241px;color:#080808;">Invert</div>
<div class="t r" style="right:462.80px;top:257px;color:#080808;">Color</div>
<div class="sk" style="left:572.60px;top:257.10px;width:6.40px;height:6.40px;background:#d0d02e"></div>
<div class="sl" style="left:490.6px;top:270.4px;width:78px;height:13.1px"><div class="sli"><div class="slf" style="width:78px"></div></div></div>
<div class="t" style="left:499.60px;top:274px;color:#080808;">Fac:</div>
<div class="t r" style="right:465.80px;top:274px;color:#080808;">1.000</div>
<div class="sk" style="left:480.80px;top:273.60px;width:6.40px;height:6.40px;background:#a9a9a9"></div>
<div class="sk" style="left:480.80px;top:288.00px;width:6.40px;height:6.40px;background:#d0d02e"></div>
<div class="t" style="left:495.60px;top:288px;color:#080808;">Color</div>
<div class="nd" style="left:451.90px;top:442.60px;width:98.50px;height:97.70px;"><div class="hd" style="height:12.60px"></div></div>
<svg class="abs" style="left:455.20px;top:446.80px" width="7" height="7"><path d="M0 0.2 L6.6 0.2 L3.3 6.2 Z" fill="#3a3a3a"/></svg>
<div class="t" style="left:466.90px;top:446px;color:#080808;">Normal Map</div>
<div class="t r" style="right:488.80px;top:462px;color:#080808;">Normal</div>
<div class="sk" style="left:547.20px;top:461.80px;width:6.40px;height:6.40px;background:#6767d2"></div>
<div class="dd" style="left:458.30px;top:478.50px;width:85.30px;height:12.80px;"></div>
<div class="t" style="left:463.30px;top:482px;color:#ececec;-webkit-text-stroke:0.05px currentColor;">Tangent Space</div>
<svg class="abs" style="left:536.90px;top:479.90px" width="5" height="10"><path d="M2.5 1.2 L4.4 4.3 L0.6 4.3 Z M2.5 8.8 L4.4 5.7 L0.6 5.7 Z" fill="#c8c8c8"/></svg>
<div class="abs" style="left:458.30px;top:494.50px;width:85.30px;height:12.90px;border-radius:3.5px;background:linear-gradient(#b8b8b8,#a0a0a0);box-shadow:inset 0 0 0 1px #353535"></div>
<svg class="abs" style="left:461.3px;top:496.0px" width="10" height="10"><circle cx="5" cy="5" r="4.3" fill="#dcdab8"/><path d="M5 5 H9.3 A4.3 4.3 0 0 1 5 9.3 Z" fill="#8a9cc0"/><rect x="2.6" y="2.6" width="2.4" height="2.4" fill="#7a7860"/><rect x="5" y="2.2" width="2.4" height="2.8" fill="#f0eed8"/><rect x="5" y="5" width="2.4" height="2.4" fill="#1e2436"/><path d="M2.4 7.4 H5 V9.3 A4.3 4.3 0 0 1 2.4 8.5 Z" fill="#405070"/><path d="M7.4 7.4 H8.6 A4.3 4.3 0 0 1 7.4 8.6 Z" fill="#2a3450"/><circle cx="5" cy="5" r="4.3" fill="none" stroke="#2a2a2a" stroke-width="0.8"/></svg>
<div class="t" style="left:474.40px;top:498px;color:#080808;">UVMap</div>
<svg class="abs" style="left:532.0px;top:497.6px" width="8" height="8"><path d="M1.3 1.3 L6.7 6.7 M6.7 1.3 L1.3 6.7" stroke="#4a4a4a" stroke-width="2.4"/><path d="M1.3 1.3 L6.7 6.7 M6.7 1.3 L1.3 6.7" stroke="#f4f4f4" stroke-width="1.1"/></svg>
<div class="nf" style="left:458.30px;top:511.40px;width:85.30px;height:12.90px;"></div>
<div class="t" style="left:468.70px;top:515px;color:#080808;">Strength:</div>
<div class="t r" style="right:491.60px;top:515px;color:#080808;">0.200</div>
<svg class="abs" style="left:460.90px;top:514.85px" width="4" height="6"><path d="M0.6 3 L3.2 0.9 L3.2 5.1 Z" fill="#8c8c8c"/></svg>
<svg class="abs" style="left:537.00px;top:514.85px" width="4" height="6"><path d="M3.4 3 L0.8 0.9 L0.8 5.1 Z" fill="#8c8c8c"/></svg>
<div class="sk" style="left:448.70px;top:514.10px;width:6.40px;height:6.40px;background:#a9a9a9"></div>
<div class="sk" style="left:448.70px;top:528.30px;width:6.40px;height:6.40px;background:#d0d02e"></div>
<div class="t" style="left:463.10px;top:529px;color:#080808;">Color</div>
<div class="nd act" style="left:628.80px;top:61.80px;width:157.20px;height:354.20px;"><div class="hd" style="height:13.10px"></div></div>
<svg class="abs" style="left:632.10px;top:66.80px" width="7" height="7"><path d="M0 0.2 L6.6 0.2 L3.3 6.2 Z" fill="#d45f1a"/></svg>
<div class="t" style="left:643.80px;top:66px;color:#080808;">Principled BSDF</div>
<div class="t r" style="right:252.80px;top:82px;color:#080808;">BSDF</div>
<div class="sk" style="left:783.20px;top:82.00px;width:6.40px;height:6.40px;background:#63c763"></div>
<div class="dd" style="left:635.10px;top:98.00px;width:144.50px;height:12.60px;"></div>
<div class="t" style="left:640.10px;top:101px;color:#ececec;-webkit-text-stroke:0.05px currentColor;">GGX</div>
<svg class="abs" style="left:772.90px;top:99.30px" width="5" height="10"><path d="M2.5 1.2 L4.4 4.3 L0.6 4.3 Z M2.5 8.8 L4.4 5.7 L0.6 5.7 Z" fill="#c8c8c8"/></svg>
<div class="dd" style="left:635.10px;top:114.80px;width:144.50px;height:12.60px;"></div>
<div class="t" style="left:640.10px;top:118px;color:#ececec;-webkit-text-stroke:0.05px currentColor;">Christensen-Burley</div>
<svg class="abs" style="left:772.90px;top:116.10px" width="5" height="10"><path d="M2.5 1.2 L4.4 4.3 L0.6 4.3 Z M2.5 8.8 L4.4 5.7 L0.6 5.7 Z" fill="#c8c8c8"/></svg>
<div class="t" style="left:639.80px;top:134px;color:#080808;">Base Color</div>
<div class="sk" style="left:625.40px;top:134.10px;width:6.40px;height:6.40px;background:#d0d02e"></div>
<div class="sl" style="left:635.30px;top:145.00px;width:144.10px;height:13.30px;"><div class="sli"><div class="slf" style="width:5.85px"></div></div></div>
<div class="t" style="left:644.30px;top:149px;color:#080808;">Subsurface:</div>
<div class="t r" style="right:255.20px;top:149px;color:#080808;">0.000</div>
<div class="sk" style="left:625.40px;top:148.70px;width:6.40px;height:6.40px;background:#a9a9a9"></div>
<div class="dd" style="left:635.10px;top:160.30px;width:144.50px;height:12.50px;"></div>
<div class="t" style="left:640.10px;top:164px;color:#ececec;-webkit-text-stroke:0.05px currentColor;">Subsurface Radius</div>
<svg class="abs" style="left:772.90px;top:161.55px" width="5" height="10"><path d="M2.5 1.2 L4.4 4.3 L0.6 4.3 Z M2.5 8.8 L4.4 5.7 L0.6 5.7 Z" fill="#c8c8c8"/></svg>
<div class="sk" style="left:625.40px;top:163.10px;width:6.40px;height:6.40px;background:#6767d2"></div>
<div class="t" style="left:639.80px;top:178px;color:#080808;">Subsurface Color</div>
<div class="abs" style="left:710.20px;top:175.30px;width:69.20px;height:11.00px;border-radius:3px;background:#e6e6e6;box-shadow:0 0 0 0.7px #3a3a3a"></div>
<div class="sk" style="left:625.40px;top:177.30px;width:6.40px;height:6.40px;background:#d0d02e"></div>
<div class="sl" style="left:635.30px;top:188.10px;width:144.10px;height:13.30px;"><div class="sli"><div class="slf" style="width:5.85px"></div></div></div>
<div class="t" style="left:644.30px;top:192px;color:#080808;">Metallic:</div>
<div class="t r" style="right:255.20px;top:192px;color:#080808;">0.000</div>
<div class="sk" style="left:625.40px;top:191.80px;width:6.40px;height:6.40px;background:#a9a9a9"></div>
<div class="sl" style="left:635.30px;top:202.80px;width:144.10px;height:13.30px;"><div class="sli"><div class="slf" style="width:50.21px"></div></div></div>
<div class="t" style="left:644.30px;top:207px;color:#080808;">Specular:</div>
<div class="t r" style="right:255.20px;top:207px;color:#080808;">0.330</div>
<div class="sk" style="left:625.40px;top:206.50px;width:6.40px;height:6.40px;background:#a9a9a9"></div>
<div class="sl" style="left:635.30px;top:217.00px;width:144.10px;height:13.30px;"><div class="sli"><div class="slf" style="width:5.85px"></div></div></div>
<div class="t" style="left:644.30px;top:221px;color:#080808;">Specular Tint:</div>
<div class="t r" style="right:255.20px;top:221px;color:#080808;">0.000</div>
<div class="sk" style="left:625.40px;top:220.70px;width:6.40px;height:6.40px;background:#a9a9a9"></div>
<div class="t" style="left:639.80px;top:235px;color:#080808;">Roughness</div>
<div class="sk" style="left:625.40px;top:235.00px;width:6.40px;height:6.40px;background:#a9a9a9"></div>
<div class="sl" style="left:635.30px;top:245.70px;width:144.10px;height:13.30px;"><div class="sli"><div class="slf" style="width:5.85px"></div></div></div>
<div class="t" style="left:644.30px;top:250px;color:#080808;">Anisotropic:</div>
<div class="t r" style="right:255.20px;top:250px;color:#080808;">0.000</div>
<div class="sk" style="left:625.40px;top:249.40px;width:6.40px;height:6.40px;background:#a9a9a9"></div>
<div class="sl" style="left:635.30px;top:260.10px;width:144.10px;height:13.30px;"><div class="sli"><div class="slf" style="width:5.85px"></div></div></div>
<div class="t" style="left:644.30px;top:264px;color:#080808;">Anisotropic Rotation:</div>
<div class="t r" style="right:255.20px;top:264px;color:#080808;">0.000</div>
<div class="sk" style="left:625.40px;top:263.80px;width:6.40px;height:6.40px;background:#a9a9a9"></div>
<div class="sl" style="left:635.30px;top:274.50px;width:144.10px;height:13.30px;"><div class="sli"><div class="slf" style="width:5.85px"></div></div></div>
<div class="t" style="left:644.30px;top:279px;color:#080808;">Sheen:</div>
<div class="t r" style="right:255.20px;top:279px;color:#080808;">0.000</div>
<div class="sk" style="left:625.40px;top:278.20px;width:6.40px;height:6.40px;background:#a9a9a9"></div>
<div class="sl" style="left:635.30px;top:289.00px;width:144.10px;height:13.30px;"><div class="sli"><div class="slf" style="width:73.58px"></div></div></div>
<div class="t" style="left:644.30px;top:293px;color:#080808;">Sheen Tint:</div>
<div class="t r" style="right:255.20px;top:293px;color:#080808;">0.500</div>
<div class="sk" style="left:625.40px;top:292.70px;width:6.40px;height:6.40px;background:#a9a9a9"></div>
<div class="sl" style="left:635.30px;top:303.20px;width:144.10px;height:13.30px;"><div class="sli"><div class="slf" style="width:5.85px"></div></div></div>
<div class="t" style="left:644.30px;top:307px;color:#080808;">Clearcoat:</div>
<div class="t r" style="right:255.20px;top:307px;color:#080808;">0.000</div>
<div class="sk" style="left:625.40px;top:306.90px;width:6.40px;height:6.40px;background:#a9a9a9"></div>
<div class="sl" style="left:635.30px;top:317.10px;width:144.10px;height:13.30px;"><div class="sli"><div class="slf" style="width:8.97px"></div></div></div>
<div class="t" style="left:644.30px;top:321px;color:#080808;">Clearcoat Roughness:</div>
<div class="t r" style="right:255.20px;top:321px;color:#080808;">0.030</div>
<div class="sk" style="left:625.40px;top:320.80px;width:6.40px;height:6.40px;background:#a9a9a9"></div>
<div class="nf" style="left:635.30px;top:330.90px;width:144.10px;height:13.30px;"></div>
<div class="t" style="left:645.70px;top:335px;color:#080808;">IOR:</div>
<div class="t r" style="right:255.80px;top:335px;color:#080808;">1.450</div>
<svg class="abs" style="left:637.90px;top:334.55px" width="4" height="6"><path d="M0.6 3 L3.2 0.9 L3.2 5.1 Z" fill="#8c8c8c"/></svg>
<svg class="abs" style="left:772.80px;top:334.55px" width="4" height="6"><path d="M3.4 3 L0.8 0.9 L0.8 5.1 Z" fill="#8c8c8c"/></svg>
<div class="sk" style="left:625.40px;top:334.60px;width:6.40px;height:6.40px;background:#a9a9a9"></div>
<div class="sl" style="left:635.30px;top:344.60px;width:144.10px;height:13.30px;"><div class="sli"><div class="slf" style="width:5.85px"></div></div></div>
<div class="t" style="left:644.30px;top:349px;color:#080808;">Transmission:</div>
<div class="t r" style="right:255.20px;top:349px;color:#080808;">0.000</div>
<div class="sk" style="left:625.40px;top:348.30px;width:6.40px;height:6.40px;background:#a9a9a9"></div>
<div class="sl" style="left:635.30px;top:358.40px;width:144.10px;height:13.30px;"><div class="sli"><div class="slf" style="width:5.85px"></div></div></div>
<div class="t" style="left:644.30px;top:362px;color:#080808;">Transmission Roughness:</div>
<div class="t r" style="right:255.20px;top:362px;color:#080808;">0.000</div>
<div class="sk" style="left:625.40px;top:362.10px;width:6.40px;height:6.40px;background:#a9a9a9"></div>
<div class="t" style="left:639.80px;top:376px;color:#080808;">Normal</div>
<div class="sk" style="left:625.40px;top:376.10px;width:6.40px;height:6.40px;background:#6767d2"></div>
<div class="t" style="left:639.80px;top:390px;color:#080808;">Clearcoat Normal</div>
<div class="sk" style="left:625.40px;top:389.80px;width:6.40px;height:6.40px;background:#6767d2"></div>
<div class="t" style="left:639.80px;top:403px;color:#080808;">Tangent</div>
<div class="sk" style="left:625.40px;top:403.40px;width:6.40px;height:6.40px;background:#6767d2"></div>
<div class="nd" style="left:864.10px;top:98.70px;width:91.90px;height:58.90px;"><div class="hd" style="height:12.90px"></div></div>
<svg class="abs" style="left:867.40px;top:103.80px" width="7" height="7"><path d="M0 0.2 L6.6 0.2 L3.3 6.2 Z" fill="#3a3a3a"/></svg>
<div class="t" style="left:879.10px;top:103px;color:#080808;">Material Output</div>
<div class="t" style="left:876.00px;top:116px;color:#080808;">Surface</div>
<div class="sk" style="left:860.90px;top:115.70px;width:6.40px;height:6.40px;background:#63c763"></div>
<div class="t" style="left:876.00px;top:130px;color:#080808;">Volume</div>
<div class="sk" style="left:860.90px;top:129.90px;width:6.40px;height:6.40px;background:#63c763"></div>
<div class="t" style="left:876.00px;top:145px;color:#080808;">Displacement</div>
<div class="sk" style="left:860.90px;top:144.80px;width:6.40px;height:6.40px;background:#6767d2"></div>
</body></html>
